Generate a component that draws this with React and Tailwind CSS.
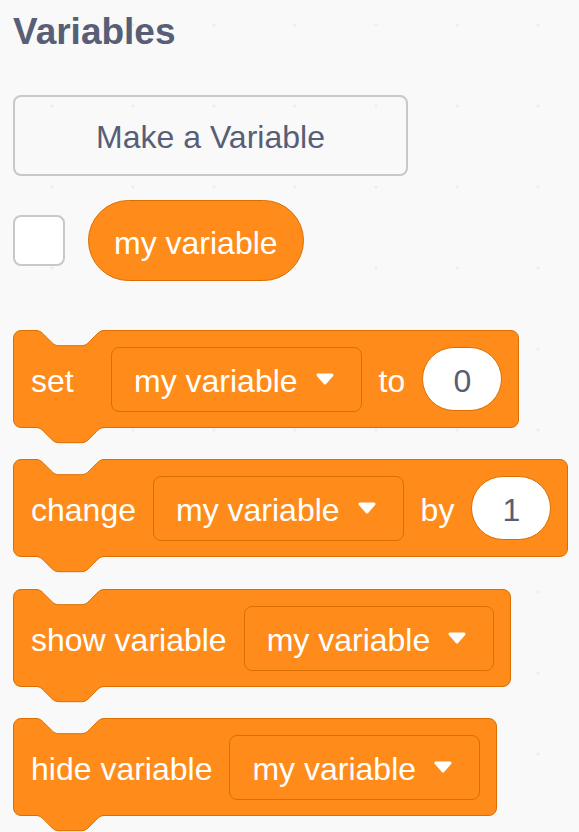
import React from "react";

const NOTCH =
  "c 3.8,0 5.7,1.9 7.6,3.8 l 7.6,7.6 c 1.9,1.9 3.8,3.8 7.6,3.8 h 22.8 c 3.8,0 5.7,-1.9 7.6,-3.8 l 7.6,-7.6 c 1.9,-1.9 3.8,-3.8 7.6,-3.8";

function TopNotch() {
  return (
    <svg className="absolute left-[22px] -top-px overflow-visible" width="69" height="18">
      <path d={`M0,0 L0,0.5 ${NOTCH} L68.4,0 Z`} fill="#f9f9f9" />
      <path d={`M0,0.5 ${NOTCH}`} fill="none" stroke="#db6e00" strokeWidth="1" />
    </svg>
  );
}

function BottomTab() {
  return (
    <svg className="absolute left-[22px] top-full overflow-visible" width="69" height="18">
      <path d={`M0,0 L0,0.5 ${NOTCH} L68.4,0 Z`} fill="#ff8c1a" />
      <path d={`M0,0.5 ${NOTCH}`} fill="none" stroke="#db6e00" strokeWidth="1" />
    </svg>
  );
}

function Dropdown() {
  return (
    <div className="flex h-[65px] items-center gap-[17px] rounded-[8px] border border-[#db6e00] bg-[#ff8c1a] pl-[22px] pr-[26px]">
      <span className="pt-[4px]">my variable</span>
      <svg width="20" height="14" viewBox="0 0 20 14">
        <path d="M3,3 H17 L10,11 Z" fill="#fff" stroke="#fff" strokeWidth="3" strokeLinejoin="round" />
      </svg>
    </div>
  );
}

function NumberInput({ value }) {
  return (
    <div className="flex h-[64px] w-[80px] items-center justify-center rounded-full border border-[#db6e00] bg-white pt-[4px] text-[#575e75]">
      {value}
    </div>
  );
}

function Block({ children, className = "" }) {
  return (
    <div
      className={`relative flex h-[98px] w-fit items-center gap-[17px] rounded-[8px] border border-[#db6e00] bg-[#ff8c1a] pl-[17px] pr-[16px] text-white ${className}`}
    >
      <TopNotch />
      {children}
      <BottomTab />
    </div>
  );
}

export default function App() {
  return (
    <div
      className="h-[832px] w-[579px] overflow-hidden bg-[#f9f9f9] bg-[radial-gradient(circle,#ebebeb_1px,transparent_1.6px)] bg-[length:81px_81px] bg-[position:11.5px_-15.5px] pl-[13px] pt-[13px] text-[32px] leading-none"
      style={{ fontFamily: '"Liberation Sans", Arial, sans-serif' }}
    >
      {/* Category title */}
      <h2 className="text-[37px] font-bold leading-none text-[#575e75]">Variables</h2>

      {/* Make a Variable */}
      <div className="mt-[45px] flex h-[81px] w-[395px] items-center justify-center rounded-[8px] border-2 border-[#c8c8c8] pt-[2px] text-[#575e75]">
        Make a Variable
      </div>

      {/* Checkbox + reporter */}
      <div className="mt-[24px] flex h-[81px] items-center gap-[23px]">
        <div className="h-[51px] w-[52px] rounded-[8px] border-2 border-[#c8c8c8] bg-white" />
        <div className="flex h-[81px] items-center rounded-full border border-[#db6e00] bg-[#ff8c1a] px-[25px] pt-[4px] text-white">
          my variable
        </div>
      </div>

      {/* Blocks */}
      <Block className="mt-[49px]">
        <span className="min-w-[63px] pt-[4px]">set</span>
        <Dropdown />
        <span className="pt-[4px]">to</span>
        <NumberInput value="0" />
      </Block>

      <Block className="mt-[31px]">
        <span className="pt-[4px]">change</span>
        <Dropdown />
        <span className="pt-[4px]">by</span>
        <NumberInput value="1" />
      </Block>

      <Block className="mt-[32px]">
        <span className="pt-[4px]">show variable</span>
        <Dropdown />
      </Block>

      <Block className="mt-[31px]">
        <span className="pt-[4px]">hide variable</span>
        <Dropdown />
      </Block>
    </div>
  );
}
